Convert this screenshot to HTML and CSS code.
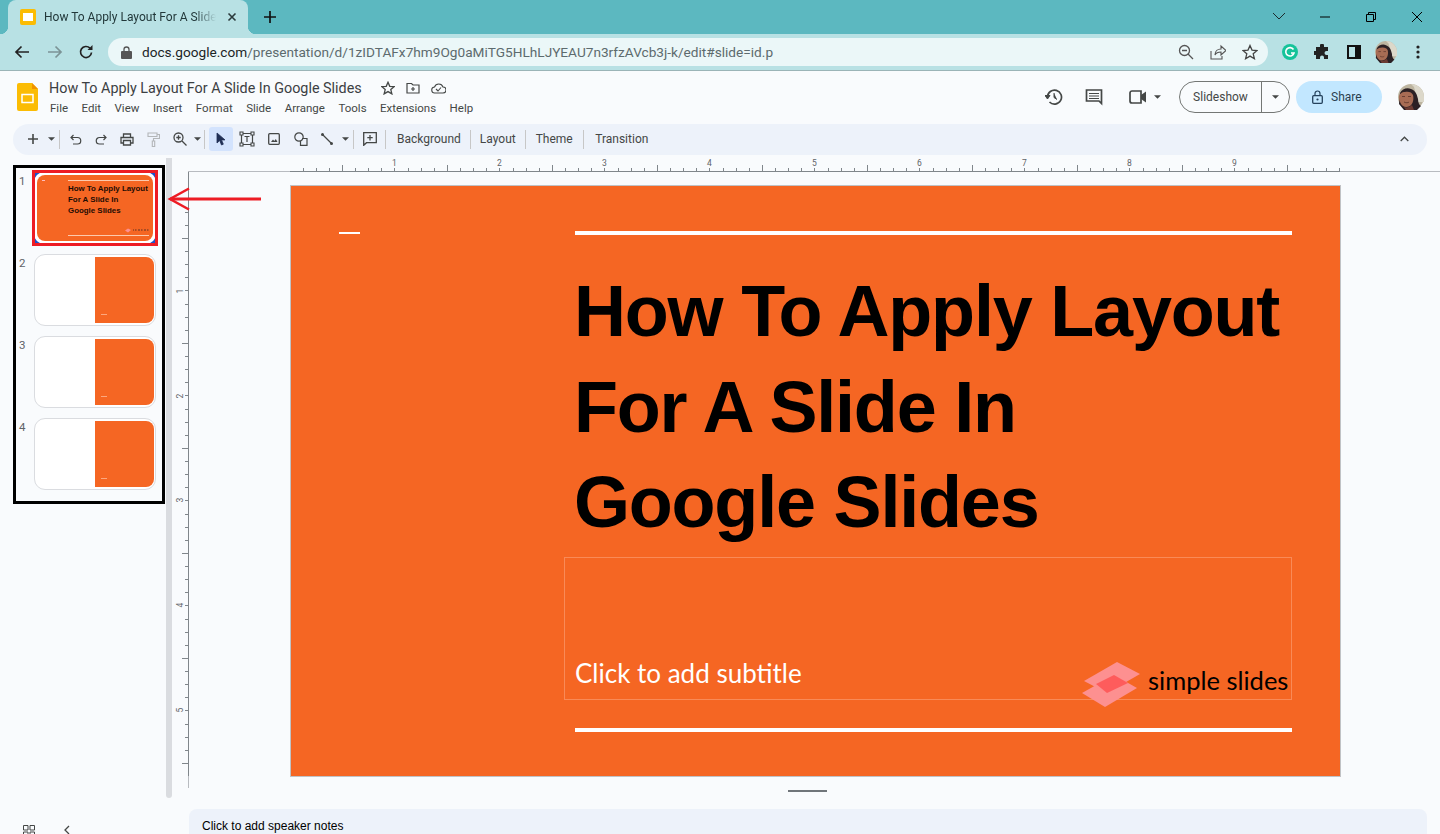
FILE: index.html
```html
<!DOCTYPE html>
<html>

<head>
    <title>How To Apply Layout For A Slide In Google Slides</title>
    <meta http-equiv="Content-Type" content="text/html; charset=utf-8">
    <link rel="stylesheet" href="styles.css">
</head>

<body>
    <svg class="defs" width="0" height="0">
        <symbol id="avatar" viewBox="0 0 26 26">
            <circle cx="13" cy="13" r="13" fill="#bdb5a0"/>
            <path d="M13 0a13 13 0 0 1 13 13v5h-6L16 3z" fill="#dcd8ca"/>
            <path d="M2 9C4 5 9 3 13 5c5 2 6 6 7 10 0 3 1 6 3 7l-4 4H6L1 20z" fill="#2b2024"/>
            <path d="M1 13c0-3 3-5 6-5 3-1 7 0 8 3 1 4 0 9-3 11-4 2-7 1-9-2-1-2-2-4-2-7z" fill="#a86c54"/>
            <path d="M4 12.500h3M10 12.500h3M6 18c2 1 4 1 5 0" stroke="#5a3429" stroke-width=".8" fill="none"/>
            <path d="M6 23c3 1 6 0 8-2l2 5H8z" fill="#6c3b33"/>
        </symbol>
        <symbol id="caret" viewBox="0 0 8 4">
            <path d="M0 0h8L4 4z" fill="#444746"/>
        </symbol>
    </svg>

    <div class="tabstrip">
        <div class="tab">
            <svg class="favicon" width="16" height="16" viewBox="0 0 16 16"><rect width="16" height="16" rx="2" fill="#fbbc04"/><rect x="3" y="4" width="10" height="8" fill="#fff"/></svg>
            <span class="tabtitle">How To Apply Layout For A Slide</span>
            <svg class="tabclose" width="10" height="10" viewBox="0 0 10 10"><path d="M1.500 1.500l7 7M8.500 1.500l-7 7" stroke="#2b3a3c" stroke-width="1.600"/></svg>
        </div>
        <svg class="newtab" width="12" height="12" viewBox="0 0 12 12"><path d="M6 0v12M0 6h12" stroke="#111" stroke-width="1.700"/></svg>
        <div class="winctl">
            <svg width="46" height="14" viewBox="0 0 46 14"><path d="M17 3l6 6 6-6" fill="none" stroke="#1d2a2c" stroke-width="1"/></svg>
            <svg width="46" height="14" viewBox="0 0 46 14"><path d="M18 7h10" stroke="#000" stroke-width="1"/></svg>
            <svg width="46" height="14" viewBox="0 0 46 14"><path d="M18.500 4.500h7v7h-7zM20.500 4.500v-2h7v7h-2" fill="none" stroke="#000" stroke-width="1"/></svg>
            <svg width="46" height="14" viewBox="0 0 46 14"><path d="M18 2l10 10M28 2L18 12" stroke="#000" stroke-width="1"/></svg>
        </div>
    </div>

    <div class="browserbar">
        <div class="navbtn"><svg width="16" height="14" viewBox="0 0 16 14"><path d="M15 7H2M7.500 1.500L2 7l5.500 5.500" fill="none" stroke="#222" stroke-width="1.700"/></svg></div>
        <div class="navbtn"><svg width="16" height="14" viewBox="0 0 16 14"><path d="M1 7h13M8.500 1.500L14 7l-5.500 5.500" fill="none" stroke="#7c9396" stroke-width="1.700"/></svg></div>
        <div class="navbtn"><svg width="16" height="16" viewBox="0 0 16 16"><path d="M13.500 8.500a5.500 5.500 0 1 1-1.500-4.300" fill="none" stroke="#222" stroke-width="1.700"/><path d="M14.500 1v5h-5z" fill="#222"/></svg></div>
        <div class="urlbar">
            <svg class="lock" width="11" height="13" viewBox="0 0 11 13"><path d="M3 5V3.500a2.500 2.500 0 0 1 5 0V5" fill="none" stroke="#555" stroke-width="1.300"/><rect y="5" width="11" height="8" rx="1" fill="#555"/></svg>
            <span class="url"><b>docs.google.com</b>/presentation/d/1zIDTAFx7hm9Og0aMiTG5HLhLJYEAU7n3rfzAVcb3j-k/edit#slide=id.p</span>
            <div class="urlicons">
                <div class="navbtn"><svg width="16" height="16" viewBox="0 0 16 16"><circle cx="6.500" cy="6.500" r="5" fill="none" stroke="#555" stroke-width="1.300"/><path d="M10 10l5 5M4 6.500h5" stroke="#555" stroke-width="1.300"/></svg></div>
                <div class="navbtn"><svg width="16" height="16" viewBox="0 0 16 16"><path d="M1 7v8h11v-3M5 11c0-4 3-6 6-6V2l5 4.500L11 11V8c-3 0-5 1-6 3z" fill="none" stroke="#555" stroke-width="1.100"/></svg></div>
                <div class="navbtn"><svg width="16" height="16" viewBox="0 0 16 16"><path d="M8 1.500l2 4.600 5 .4-3.800 3.300 1.200 4.900L8 12.100l-4.400 2.600 1.200-4.900L1 6.500l5-.4z" fill="none" stroke="#444" stroke-width="1.300"/></svg></div>
            </div>
        </div>
        <div class="extbtns">
            <div class="navbtn"><svg width="16" height="16" viewBox="0 0 16 16"><circle cx="8" cy="8" r="8" fill="#15c39a"/><path d="M11.500 5.500A4.200 4.200 0 1 0 12 9H9" fill="none" stroke="#fff" stroke-width="1.600"/></svg></div>
            <div class="navbtn"><svg width="16" height="16" viewBox="0 0 16 16"><path d="M6 1.500a2 2 0 0 1 4 0V3h4v4h-1.500a2 2 0 0 0 0 4H14v4h-4v-1.500a2 2 0 0 0-4 0V15H2v-4H.500a2 2 0 0 1 0-4H2V3h4z" fill="#222"/></svg></div>
            <div class="navbtn"><svg width="14" height="14" viewBox="0 0 14 14"><rect x="1" y="1" width="12" height="12" fill="none" stroke="#111" stroke-width="2"/><rect x="8" y="1" width="5" height="12" fill="#111"/></svg></div>
            <div class="navbtn"><svg width="22" height="22"><use href="#avatar"/></svg></div>
            <div class="navbtn"><svg width="4" height="14" viewBox="0 0 4 14"><circle cx="2" cy="2" r="1.600" fill="#222"/><circle cx="2" cy="7" r="1.600" fill="#222"/><circle cx="2" cy="12" r="1.600" fill="#222"/></svg></div>
        </div>
    </div>

    <div class="dochead">
        <svg class="doclogo" width="21" height="28" viewBox="0 0 21 28">
            <path d="M2 0h13l6 6v20a2 2 0 0 1-2 2H2a2 2 0 0 1-2-2V2a2 2 0 0 1 2-2z" fill="#fbbc04"/>
            <path d="M15 0l6 6h-6z" fill="#f09300"/>
            <rect x="5" y="11.500" width="11" height="8" fill="none" stroke="#fff" stroke-width="1.500"/>
        </svg>
        <div class="docinfo">
            <div class="titlerow">
                <span class="doctitle">How To Apply Layout For A Slide In Google Slides</span>
                <svg width="14" height="14" viewBox="0 0 16 16"><path d="M8 1.500l2 4.600 5 .4-3.800 3.300 1.200 4.900L8 12.100l-4.400 2.600 1.200-4.900L1 6.500l5-.4z" fill="none" stroke="#444746" stroke-width="1.500"/></svg>
                <svg width="14" height="12" viewBox="0 0 14 12"><path d="M1 2.500V11h12V3H7L5.500 1.500H1zM7 5v4M5 7h4" fill="none" stroke="#444746" stroke-width="1.200"/></svg>
                <svg width="15" height="12" viewBox="0 0 15 12"><path d="M4 11a3 3 0 0 1-.5-6A4.500 4.500 0 0 1 12 5a3 3 0 0 1 0 6zM5 7l2 2 3-3.500" fill="none" stroke="#444746" stroke-width="1.100"/></svg>
            </div>
            <div class="menubar">
                <span>File</span><span>Edit</span><span>View</span><span>Insert</span><span>Format</span><span>Slide</span><span>Arrange</span><span>Tools</span><span>Extensions</span><span>Help</span>
            </div>
        </div>
        <div class="headright">
            <svg class="hicon" width="18" height="18" viewBox="0 0 18 18"><path d="M2.500 9a7 7 0 1 1 2 5" fill="none" stroke="#444746" stroke-width="1.700"/><path d="M0 7.500h5L2.500 11zM9 5v4.500l3 2" fill="#444746" stroke="#444746" stroke-width="1"/></svg>
            <svg class="hicon wide" width="18" height="18" viewBox="0 0 18 18"><path d="M1.500 2h15v13.500L14 13H1.500z" fill="none" stroke="#444746" stroke-width="1.700"/><path d="M4 5.500h10M4 8h10M4 10.500h10" stroke="#444746" stroke-width="1.200"/></svg>
            <svg class="hicon cam" width="18" height="14" viewBox="0 0 18 14"><path d="M3 1h9v12H3a2 2 0 0 1-2-2V3a2 2 0 0 1 2-2z" fill="none" stroke="#444746" stroke-width="1.700"/><path d="M12 5l5-3.500v11L12 9z" fill="#444746"/></svg>
            <svg class="hcaret" width="7" height="4"><use href="#caret"/></svg>
            <div class="slideshow"><span class="ssmain">Slideshow</span><span class="sscaret"><svg width="7" height="4"><use href="#caret"/></svg></span></div>
            <div class="share">
                <svg width="11" height="14" viewBox="0 0 11 14"><path d="M3 5.500V3.500a2.500 2.500 0 0 1 5 0v2" fill="none" stroke="#24415c" stroke-width="1.200"/><rect x=".7" y="5.700" width="9.600" height="7.600" rx="1" fill="none" stroke="#24415c" stroke-width="1.300"/><circle cx="5.500" cy="9.500" r="1.100" fill="#24415c"/></svg>
                Share
            </div>
            <svg class="havatar" width="26" height="26"><use href="#avatar"/></svg>
        </div>
    </div>

    <div class="toolbar">
        <div class="tool"><svg width="10" height="10" viewBox="0 0 10 10"><path d="M5 0v10M0 5h10" stroke="#444746" stroke-width="1.600"/></svg></div>
        <div class="tcaret"><svg width="7" height="4"><use href="#caret"/></svg></div>
        <div class="sep"></div>
        <div class="tool"><svg width="12" height="11" viewBox="0 0 12 11"><path d="M3.500 1L1 3.500 3.500 6M1 3.500h6.500a3.200 3.200 0 0 1 0 6.500H3" fill="none" stroke="#444746" stroke-width="1.200"/></svg></div>
        <div class="tool pull"><svg width="12" height="11" viewBox="0 0 12 11"><path d="M8.500 1L11 3.500 8.500 6M11 3.500H4.500a3.200 3.200 0 0 0 0 6.500H9" fill="none" stroke="#444746" stroke-width="1.200"/></svg></div>
        <div class="tool"><svg width="14" height="13" viewBox="0 0 14 13"><path d="M3.500 4V1h7v3M3.500 10H1V4.500h12V10h-2.500M3.500 7.500h7V12h-7z" fill="none" stroke="#444746" stroke-width="1.300"/></svg></div>
        <div class="tool"><svg width="13" height="15" viewBox="0 0 13 15"><path d="M1 1h9v3.500H1zM10 2.500h2.500v4H6.500V9M5.300 9h2.400v5.500H5.300z" fill="none" stroke="#b3b6b8" stroke-width="1.100"/></svg></div>
        <div class="tool push"><svg width="14" height="14" viewBox="0 0 14 14"><circle cx="5.500" cy="5.500" r="4.500" fill="none" stroke="#444746" stroke-width="1.300"/><path d="M9 9l4.500 4.500M5.500 3.300v4.400M3.300 5.500h4.400" stroke="#444746" stroke-width="1.300"/></svg></div>
        <div class="tcaret narrow"><svg width="7" height="4"><use href="#caret"/></svg></div>
        <div class="sep"></div>
        <div class="tool active"><svg width="10" height="14" viewBox="0 0 10 14"><path d="M1 1v10l2.700-2.500L5.500 13l1.800-.8-1.800-4.300H9z" fill="#1f2f55" stroke="#1f2f55" stroke-width=".8"/></svg></div>
        <div class="tool"><svg width="16" height="16" viewBox="0 0 16 16"><path d="M2.500 2.500h11v11h-11zM5.500 5.500h5M8 5.500v5.500" fill="none" stroke="#444746" stroke-width="1.200"/><path d="M1 1h3v3H1zM12 1h3v3h-3zM1 12h3v3H1zM12 12h3v3h-3z" fill="#edf2fa" stroke="#444746" stroke-width="1.100"/></svg></div>
        <div class="tool push"><svg width="12" height="12" viewBox="0 0 12 12"><rect x=".7" y=".7" width="10.600" height="10.600" rx="1" fill="none" stroke="#444746" stroke-width="1.300"/><path d="M3 9l2-2.500 1.300 1.500L7.800 6 9.500 9z" fill="#444746"/></svg></div>
        <div class="tool push"><svg width="14" height="14" viewBox="0 0 14 14"><circle cx="5" cy="5" r="4.200" fill="none" stroke="#444746" stroke-width="1.200"/><path d="M8 6.500h5v6.800H6.500V9" fill="none" stroke="#444746" stroke-width="1.200"/></svg></div>
        <div class="tool"><svg width="12" height="12" viewBox="0 0 12 12"><path d="M1 1l10 10" stroke="#444746" stroke-width="1.300"/><circle cx="1.500" cy="1.500" r="1.500" fill="#444746"/><circle cx="10.500" cy="10.500" r="1.500" fill="#444746"/></svg></div>
        <div class="tcaret"><svg width="7" height="4"><use href="#caret"/></svg></div>
        <div class="sep"></div>
        <div class="tool"><svg width="14" height="14" viewBox="0 0 14 14"><path d="M.7.700h12.600v10H3.500L.7 13.300zM7 3v5.500M4.300 5.700h5.400" fill="none" stroke="#444746" stroke-width="1.300"/></svg></div>
        <div class="sep tight"></div>
        <span class="tlabel first">Background</span>
        <div class="sep"></div>
        <span class="tlabel">Layout</span>
        <div class="sep"></div>
        <span class="tlabel theme">Theme</span>
        <div class="sep"></div>
        <span class="tlabel last">Transition</span>
        <svg class="collapse" width="9" height="6" viewBox="0 0 9 6"><path d="M.7 5l3.800-3.800L8.300 5" fill="none" stroke="#444746" stroke-width="1.300"/></svg>
    </div>

    <div class="workspace">
        <div class="sidebar">
            <div class="filmstrip">
                <div class="filmrow">
                    <span class="num">1</span>
                    <div class="thumb first">
                        <div class="thumbring">
                            <div class="thumbcover">
                                <i class="tdash"></i>
                                <i class="tline"></i>
                                <div class="ttitle">How To Apply Layout<br>For A Slide In<br>Google Slides</div>
                                <svg class="tlogo" width="24" height="5" viewBox="0 0 24 5">
                                    <path d="M0 2.500L3 .5l3 1.500-3 2.500z" fill="#fd8f8f"/>
                                    <path d="M8 2h1M10 2h1.500M13 2h2M16 2h1.500M19 2h2M22 2h1.500" stroke="#5c3326" stroke-width="1.200"/>
                                </svg>
                                <i class="tline low"></i>
                            </div>
                        </div>
                    </div>
                </div>
                <div class="filmrow">
                    <span class="num">2</span>
                    <div class="thumb"><div class="thumbhalf"><i></i></div></div>
                </div>
                <div class="filmrow">
                    <span class="num">3</span>
                    <div class="thumb"><div class="thumbhalf"><i></i></div></div>
                </div>
                <div class="filmrow">
                    <span class="num">4</span>
                    <div class="thumb"><div class="thumbhalf"><i></i></div></div>
                </div>
            </div>
            <div class="scrolltrack"></div>
            <svg class="pointer" width="95" height="24" viewBox="0 0 95 24"><path d="M94 12H3" fill="none" stroke="#ed1c24" stroke-width="3"/><path d="M22 1.500L3 12l19 10.500" fill="none" stroke="#ed1c24" stroke-width="2.500"/></svg>
            <div class="sidefoot">
                <svg width="12" height="12" viewBox="0 0 12 12"><path d="M.5.500h4.500v4.500H.5zM7 .500h4.500v4.500H7zM.5 7h4.500v4.500H.5zM7 7h4.500v4.500H7z" fill="none" stroke="#444746" stroke-width="1"/></svg>
                <svg width="6" height="10" viewBox="0 0 6 10"><path d="M5 1L1 5l4 4" fill="none" stroke="#444746" stroke-width="1.300"/></svg>
            </div>
        </div>

        <div class="editor">
            <svg class="rulertop" width="1268" height="17" viewBox="172 155 1268 17">
                <defs>
                    <pattern id="hticks" x="290" y="155" width="105" height="17" patternUnits="userSpaceOnUse">
                        <path d="M13.500 13v4M26.500 13v4M39.500 13v4M65.500 13v4M78.500 13v4M91.500 13v4M104.500 13v4" stroke="#80868b" stroke-width="1"/>
                        <path d="M52.500 10v7" stroke="#80868b" stroke-width="1"/>
                    </pattern>
                </defs>
                <rect x="290" y="155" width="1050" height="17" fill="url(#hticks)"/>
                <path d="M188 171.500h102M1340 171.500h100" stroke="#b8bbc0" stroke-width="1"/>
                <path d="M290 171.500h1050" stroke="#80868b" stroke-width="1"/>
                <g class="rulernum">
                    <text x="394.500" y="166">1</text>
                    <text x="499.500" y="166">2</text>
                    <text x="604.500" y="166">3</text>
                    <text x="709.500" y="166">4</text>
                    <text x="814.500" y="166">5</text>
                    <text x="919.500" y="166">6</text>
                    <text x="1024.500" y="166">7</text>
                    <text x="1129.500" y="166">8</text>
                    <text x="1234.500" y="166">9</text>
                </g>
            </svg>
            <div class="canvasrow">
                <svg class="rulerleft" width="17" height="616" viewBox="172 172 17 616">
                    <defs>
                        <pattern id="vticks" x="172" y="186" width="17" height="105" patternUnits="userSpaceOnUse">
                            <path d="M13 13.500h4M13 26.500h4M13 39.500h4M13 65.500h4M13 78.500h4M13 91.500h4M13 104.500h4" stroke="#80868b" stroke-width="1"/>
                            <path d="M10 52.500h7" stroke="#80868b" stroke-width="1"/>
                        </pattern>
                    </defs>
                    <rect x="172" y="186" width="17" height="590" fill="url(#vticks)"/>
                    <path d="M188.500 172v604" stroke="#80868b" stroke-width="1"/>
                    <path d="M188.500 776v12" stroke="#b8bbc0" stroke-width="1"/>
                    <g class="rulernum">
                        <text transform="translate(183 291) rotate(-90)">1</text>
                        <text transform="translate(183 396) rotate(-90)">2</text>
                        <text transform="translate(183 500) rotate(-90)">3</text>
                        <text transform="translate(183 605) rotate(-90)">4</text>
                        <text transform="translate(183 710) rotate(-90)">5</text>
                    </g>
                </svg>
                <div class="stage">
                    <div class="slide">
                        <i class="dash"></i>
                        <i class="rule top"></i>
                        <h1 class="slidetitle">How To Apply Layout<br>For A Slide In<br>Google Slides</h1>
                        <div class="subtitlebox"><span>Click to add subtitle</span></div>
                        <div class="brand">
                            <svg width="60" height="48" viewBox="1082 660 60 48">
                                <path d="M1082 693l32-18 23 13-32 19z" fill="#fd9090"/>
                                <path d="M1084 681l33-19 23 12-33 19z" fill="#fd9090"/>
                                <path d="M1096 684l18-9 14 8-21 10z" fill="#fe5c5c"/>
                            </svg>
                            <span>simple slides</span>
                        </div>
                        <i class="rule bottom"></i>
                    </div>
                </div>
            </div>
            <div class="handle"></div>
            <div class="notes">Click to add speaker notes</div>
        </div>
    </div>
</body>

</html>
```

FILE: styles.css
```css
html,
body {
    margin: 0;
    height: 834px;
    overflow: hidden;
}

body {
    background-color: #f9fbfd;
    font-family: Roboto, 'Liberation Sans', sans-serif;
    color: #444746;
    display: flex;
    flex-direction: column;
}

.defs {
    position: absolute;
}

svg {
    display: block;
    flex-shrink: 0;
}

/* browser */
.tabstrip {
    height: 34px;
    background-color: #5cb8c0;
    display: flex;
    align-items: center;
    flex-shrink: 0;
}

.tab {
    position: relative;
    width: 240px;
    height: 34px;
    margin-left: 8px;
    background-color: #b8e1e4;
    border-radius: 8px 8px 0 0;
    display: flex;
    align-items: center;
    box-sizing: border-box;
    padding-left: 12px;
}

.tab::before,
.tab::after {
    content: '';
    position: absolute;
    bottom: 0;
    width: 8px;
    height: 8px;
}

.tab::before {
    left: -8px;
    background: radial-gradient(circle at 0 0, transparent 8px, #b8e1e4 8.500px);
}

.tab::after {
    right: -8px;
    background: radial-gradient(circle at 100% 0, transparent 8px, #b8e1e4 8.500px);
}

.tabtitle {
    width: 172px;
    margin-left: 8px;
    font-size: 12px;
    color: #22383a;
    white-space: nowrap;
    -webkit-mask-image: linear-gradient(to right, #000 88%, transparent);
    mask-image: linear-gradient(to right, #000 88%, transparent);
}

.tabclose {
    margin-left: 11px;
}

.newtab {
    margin-left: 16px;
}

.winctl {
    margin-left: auto;
    display: flex;
    margin-right: 0;
}

.browserbar {
    height: 36px;
    background-color: #b8e1e4;
    border-bottom: 1px solid #9bb4b7;
    display: flex;
    align-items: center;
    padding-left: 6px;
    flex-shrink: 0;
}

.navbtn {
    width: 32px;
    height: 28px;
    display: flex;
    align-items: center;
    justify-content: center;
    flex-shrink: 0;
}

.browserbar > .navbtn:nth-child(2) {
    margin-left: 1px;
}

.browserbar > .navbtn:nth-child(3) {
    margin-left: -1px;
}

.urlbar {
    width: 1160px;
    height: 28px;
    margin-left: 6px;
    border-radius: 14px;
    background-color: #ebf7f8;
    display: flex;
    align-items: center;
    box-sizing: border-box;
    padding-left: 13px;
}

.url {
    margin-left: 10px;
    font-size: 13.650px;
    color: #5d6b6e;
    white-space: nowrap;
}

.url b {
    font-weight: 400;
    color: #1c2526;
}

.urlicons {
    margin-left: auto;
    display: flex;
    padding-right: 2px;
}

.extbtns {
    display: flex;
    margin-left: 6px;
}

/* docs header */
.dochead {
    height: 53px;
    display: flex;
    box-sizing: border-box;
    padding-left: 17px;
    flex-shrink: 0;
}

.doclogo {
    margin-top: 12px;
}

.docinfo {
    margin-left: 11px;
    padding-top: 7px;
}

.titlerow {
    display: flex;
    align-items: center;
    height: 20px;
    gap: 11px;
}

.doctitle {
    font-size: 14.350px;
    color: #3c4043;
    margin-right: 8px;
}

.menubar {
    display: flex;
    gap: 13.500px;
    font-size: 11.500px;
    color: #444746;
    margin-top: 3px;
    padding-left: 1px;
}

.headright {
    margin-left: auto;
    display: flex;
    align-items: center;
    height: 52px;
}

.hicon {
    margin-right: 22px;
}

.hicon.wide {
    margin-right: 26px;
}

.hicon.cam {
    margin-right: 7px;
}

.hcaret {
    margin-right: 18px;
}

.slideshow {
    width: 111px;
    height: 32px;
    border: 1px solid #747775;
    border-radius: 16px;
    box-sizing: border-box;
    display: flex;
    font-size: 12px;
}

.ssmain {
    width: 81px;
    border-right: 1px solid #747775;
    display: flex;
    align-items: center;
    justify-content: center;
}

.sscaret {
    flex: 1;
    display: flex;
    align-items: center;
    justify-content: center;
}

.share {
    width: 86px;
    height: 32px;
    margin-left: 6px;
    border-radius: 16px;
    background-color: #c2e7ff;
    display: flex;
    align-items: center;
    box-sizing: border-box;
    padding-left: 16px;
    gap: 8px;
    font-size: 12px;
    color: #2b3f4f;
}

.havatar {
    margin: 0 16px;
}

/* toolbar */
.toolbar {
    width: 1414px;
    height: 31px;
    margin-left: 13px;
    border-radius: 16px;
    background-color: #edf2fa;
    display: flex;
    align-items: center;
    box-sizing: border-box;
    padding: 0 0 1px 7px;
    flex-shrink: 0;
}

.tool {
    width: 26px;
    height: 24px;
    display: flex;
    align-items: center;
    justify-content: center;
    flex-shrink: 0;
}

.tool.pull {
    margin-left: -1px;
}

.tool.push {
    margin-left: 1px;
}

.tool.active {
    width: 24px;
    margin: 0 1px;
    background-color: #d3e3fd;
    border-radius: 3px;
}

.tcaret {
    width: 10px;
    display: flex;
    justify-content: center;
}

.tcaret.narrow {
    width: 8px;
}

.sep {
    width: 1px;
    height: 19px;
    margin: 0 3px;
    background-color: #c7c7c7;
    flex-shrink: 0;
}

.sep.tight {
    margin-left: 2px;
}

.tlabel {
    font-size: 12px;
    padding: 0 6.500px 0 5.500px;
    color: #444746;
}

.tlabel.first {
    padding-left: 8px;
}

.tlabel.theme {
    padding: 0 7px 0 6.500px;
}

.tlabel.last {
    padding-left: 8.500px;
}

.collapse {
    margin-left: auto;
    margin-right: 18px;
}

/* workspace */
.workspace {
    flex: 1;
    display: flex;
    min-height: 0;
}

.sidebar {
    position: relative;
    width: 172px;
    flex-shrink: 0;
}

.filmstrip {
    width: 152px;
    height: 339px;
    margin: 10px 0 0 13px;
    border: 3px solid #000;
    box-sizing: border-box;
    padding-top: 4px;
    display: flex;
    flex-direction: column;
    gap: 10px;
}

.filmrow {
    display: flex;
    height: 72px;
}

.num {
    width: 18px;
    padding-left: 3px;
    box-sizing: border-box;
    font-size: 11.500px;
    color: #5f6368;
    margin-top: 2px;
}

.thumb {
    width: 122px;
    height: 72px;
    box-sizing: border-box;
    border: 1px solid #dadce0;
    border-radius: 11px;
    background-color: #fff;
    padding: 2px 1px 2px 2px;
}

.thumb.first {
    border: none;
    border-radius: 0;
    padding: 0;
    background-color: #1c53c8;
    outline: 3px solid #ed1c24;
    outline-offset: -1px;
}

.thumbring {
    height: 100%;
    box-sizing: border-box;
    background-color: #fff;
    border-radius: 10px;
    padding: 3px;
}

.thumbcover {
    position: relative;
    height: 100%;
    background-color: #f56623;
    border-radius: 8px;
}

.tdash,
.tline,
.tlogo {
    position: absolute;
    display: block;
}

.tdash {
    left: 5px;
    top: 5px;
    width: 3px;
    height: 1px;
    background-color: #fbb;
}

.tline {
    left: 31px;
    right: 4px;
    top: 5px;
    height: 1px;
    background-color: #fcc9ad;
}

.tline.low {
    top: 60px;
}

.tlogo {
    left: 88px;
    top: 53px;
}

.ttitle {
    position: absolute;
    left: 31px;
    top: 8px;
    font-family: 'Liberation Sans', Arial, sans-serif;
    font-weight: 700;
    font-size: 7.900px;
    line-height: 11px;
    color: #1e0c04;
    white-space: nowrap;
}

.thumbhalf {
    height: 100%;
    margin-left: 58px;
    background-color: #f56623;
    border-radius: 0 8px 8px 0;
    position: relative;
}

.thumbhalf i {
    position: absolute;
    left: 6px;
    bottom: 8px;
    width: 6px;
    height: 1px;
    background-color: #fca77e;
}

.scrolltrack {
    position: absolute;
    left: 166px;
    top: 3px;
    width: 6px;
    height: 640px;
    background-color: #dadce0;
    border-radius: 0 0 3px 3px;
}

.pointer {
    position: absolute;
    left: 167px;
    top: 32px;
}

.sidefoot {
    position: absolute;
    left: 23px;
    top: 670px;
    display: flex;
    gap: 29px;
}

.editor {
    flex: 1;
    min-width: 0;
    display: flex;
    flex-direction: column;
}

.rulernum text {
    font-size: 8.500px;
    fill: #5f6368;
    text-anchor: middle;
}

.canvasrow {
    display: flex;
    height: 616px;
}

.stage {
    padding: 14px 0 0 102px;
}

.slide {
    position: relative;
    width: 1049px;
    height: 590px;
    background-color: #f56623;
    outline: 1px solid #c0c2c5;
    font-family: 'Liberation Sans', Arial, sans-serif;
}

.dash,
.rule {
    position: absolute;
    display: block;
    background-color: #fff;
}

.dash {
    left: 48px;
    top: 46px;
    width: 21px;
    height: 2px;
}

.rule {
    left: 284px;
    width: 717px;
    height: 3.500px;
}

.rule.top {
    top: 45px;
}

.rule.bottom {
    top: 542px;
}

.slidetitle {
    position: absolute;
    left: 283px;
    top: 78px;
    margin: 0;
    font-size: 72px;
    letter-spacing: -1.200px;
    line-height: 95.500px;
    font-weight: 700;
    color: #000;
    white-space: nowrap;
}

.subtitlebox {
    position: absolute;
    left: 273px;
    top: 371px;
    width: 728px;
    height: 143px;
    box-sizing: border-box;
    border: 1px solid #f98a57;
    display: flex;
    align-items: flex-end;
    padding: 0 0 10px 10px;
    font-family: Lato, sans-serif;
    font-size: 26px;
    color: #fff;
}

.brand {
    position: absolute;
    left: 791px;
    top: 473px;
    display: flex;
    gap: 6px;
    font-family: Lato, sans-serif;
    font-size: 25.500px;
    line-height: 42px;
    color: #000;
    white-space: nowrap;
}

.brand svg {
    margin-top: 1px;
}

.handle {
    width: 39px;
    height: 2px;
    margin: 2px 0 0 616px;
    background-color: #70757a;
    flex-shrink: 0;
}

.notes {
    margin: 17px 13px 0 17px;
    flex: 1;
    background-color: #edf2fa;
    border-radius: 8px 8px 0 0;
    box-sizing: border-box;
    padding: 10px 0 0 13px;
    font-family: 'Liberation Sans', Arial, sans-serif;
    font-size: 12px;
    color: #000;
}
```
